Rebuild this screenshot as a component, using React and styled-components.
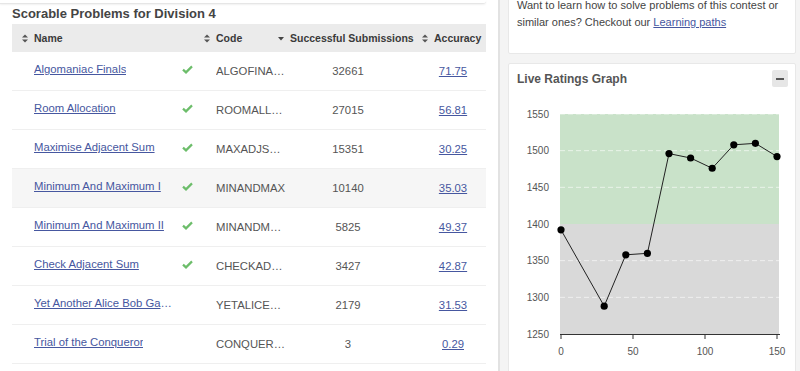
import React from 'react';
import styled, { createGlobalStyle } from 'styled-components';

const GlobalStyle = createGlobalStyle`
  body {
    margin: 0;
    background: #f4f4f4;
    font-family: "Liberation Sans", Arial, sans-serif;
    overflow: hidden;
  }
`;

const Page = styled.div`
  display: flex;
  height: 371px;
  overflow: hidden;
`;

const LeftCol = styled.div`
  width: 498px;
  flex-shrink: 0;
  background: #fff;
  border-right: 2px solid #e2e2e2;
`;

const TopStub = styled.div`
  height: 3px;
  margin-right: 12px;
  border-bottom: 1px solid #e6e6e6;
  border-radius: 0 0 3px 0;
  box-shadow: 0 1px 2px rgba(0, 0, 0, 0.06);
`;

const Title = styled.h2`
  margin: 0 0 2px 12px;
  padding-top: 1px;
  font-size: 13px;
  line-height: 17px;
  font-weight: bold;
  color: #444;
`;

const Table = styled.div`
  margin: 0 12px;
  width: 474px;
`;

const Row = styled.div`
  display: grid;
  grid-template-columns: 182px 82px 144px 66px;
  align-items: center;
  height: ${p => (p.$head ? '28px' : '38px')};
  background: ${p => (p.$head ? '#ebebeb' : p.$hover ? '#f6f6f6' : '#fff')};
  border-bottom: ${p => (p.$head ? 'none' : '1px solid #efefef')};
`;

const HeadCell = styled.div`
  display: flex;
  align-items: center;
  gap: 6px;
  padding-left: ${p => p.$pad}px;
  font-size: 10.5px;
  font-weight: bold;
  color: #3a3a3a;
  white-space: nowrap;
`;

const NameCell = styled.div`
  display: flex;
  align-items: center;
  justify-content: space-between;
  padding: 0 1px 4px 22px;
  font-size: 11.3px;
`;

const NameLink = styled.a`
  color: #4657a0;
  text-decoration: underline;
  max-width: 140px;
  white-space: nowrap;
  overflow: hidden;
  text-overflow: ellipsis;
`;

const CodeCell = styled.div`
  padding-left: 22px;
  font-size: 11.3px;
  color: #555;
`;

const CodeText = styled.div`
  width: 70px;
  white-space: nowrap;
  overflow: hidden;
  text-overflow: ellipsis;
`;

const NumCell = styled.div`
  text-align: center;
  font-size: 11.3px;
  color: #555;
`;

const AccLink = styled.a`
  color: #4657a0;
  text-decoration: underline;
`;

const RightCol = styled.div`
  width: 288px;
  margin-left: 8px;
  display: flex;
  flex-direction: column;
  gap: 9px;
`;

const Card = styled.div`
  background: #fff;
  border: 1px solid #e8e8e8;
  border-radius: 2px;
`;

const InfoCard = styled(Card)`
  margin-top: -6px;
  padding: 2px 8px 22px;
  font-size: 11px;
  line-height: 17px;
  color: #444;
`;

const InfoLink = styled.a`
  color: #4657a0;
  text-decoration: underline;
`;

const CardHead = styled.div`
  display: flex;
  align-items: center;
  justify-content: space-between;
  padding: 6px 7px 0 8px;
  height: 17px;
`;

const CardTitle = styled.span`
  font-size: 12px;
  font-weight: bold;
  color: #555;
`;

const MinusBtn = styled.button`
  width: 16px;
  height: 17px;
  border: none;
  border-radius: 2px;
  background: #e6e6e6;
  padding: 0;
  display: flex;
  align-items: center;
  justify-content: center;

  &::after {
    content: '';
    width: 8px;
    height: 2px;
    background: #555;
  }
`;

const ChartBox = styled.div`
  margin-top: 12px;
  height: 280px;
`;

const SortIcon = ({ down }) => (
  <svg width="6" height="9" viewBox="0 0 6 9">
    {down ? (
      <path d="M0 3 L6 3 L3 6.5 Z" fill="#444" />
    ) : (
      <>
        <path d="M0 3.6 L6 3.6 L3 0.5 Z" fill="#555" />
        <path d="M0 5.4 L6 5.4 L3 8.5 Z" fill="#555" />
      </>
    )}
  </svg>
);

const Check = () => (
  <svg width="11" height="9" viewBox="0 0 11 9">
    <path d="M1 4.6 L4 7.4 L10 1.4" fill="none" stroke="#6cbd6a" strokeWidth="2.2" />
  </svg>
);

const problems = [
  { name: 'Algomaniac Finals', code: 'ALGOFINALS', subs: 32661, acc: '71.75', ok: true },
  { name: 'Room Allocation', code: 'ROOMALLOC', subs: 27015, acc: '56.81', ok: true },
  { name: 'Maximise Adjacent Sum', code: 'MAXADJSUM', subs: 15351, acc: '30.25', ok: true },
  { name: 'Minimum And Maximum I', code: 'MINANDMAX', subs: 10140, acc: '35.03', ok: true, hover: true },
  { name: 'Minimum And Maximum II', code: 'MINANDMAX2', subs: 5825, acc: '49.37', ok: true },
  { name: 'Check Adjacent Sum', code: 'CHECKADJSUM', subs: 3427, acc: '42.87', ok: true },
  { name: 'Yet Another Alice Bob Game', code: 'YETALICEBOB', subs: 2179, acc: '31.53' },
  { name: 'Trial of the Conqueror', code: 'CONQUEROR', subs: 3, acc: '0.29' },
];

const ratings = [
  [0, 1392], [30, 1288], [45, 1358], [60, 1360], [75, 1496],
  [90, 1490], [105, 1476], [120, 1508], [135, 1510], [150, 1492],
];

const px = t => 52 + t * 1.44;
const py = v => 235 - (v - 1250) * (220 / 300);

const RatingsChart = () => (
  <svg width="288" height="280" viewBox="0 0 288 280" fontFamily="Liberation Sans, Arial, sans-serif">
    <rect x="51" y={py(1550)} width="219" height={py(1400) - py(1550)} fill="#c9e2c9" />
    <rect x="51" y={py(1400)} width="219" height={py(1250) - py(1400)} fill="#d9d9d9" />
    {[1550, 1500, 1450, 1350, 1300].map(v => (
      <line key={v} x1="51" x2="270" y1={py(v)} y2={py(v)} stroke="#fff" strokeOpacity="0.6" strokeDasharray="5 3" />
    ))}
    {[1550, 1500, 1450, 1400, 1350, 1300, 1250].map(v => (
      <text key={v} x="40" y={py(v) + 3.5} fontSize="10" fill="#555" textAnchor="end">{v}</text>
    ))}
    <line x1="51" x2="271" y1="235.5" y2="235.5" stroke="#333" />
    {[0, 50, 100, 150].map(t => (
      <g key={t}>
        <line x1={px(t)} x2={px(t)} y1="235" y2="240" stroke="#333" />
        <text x={px(t)} y="256" fontSize="10" fill="#555" textAnchor="middle">{t}</text>
      </g>
    ))}
    <polyline
      points={ratings.map(([t, v]) => `${px(t)},${py(v)}`).join(' ')}
      fill="none"
      stroke="#222"
      strokeWidth="1"
    />
    {ratings.map(([t, v]) => (
      <circle key={t} cx={px(t)} cy={py(v)} r="3.6" fill="#000" />
    ))}
  </svg>
);

export default function App() {
  return (
    <>
      <GlobalStyle />
      <Page>
        <LeftCol>
          <TopStub />
          <Title>Scorable Problems for Division 4</Title>
          <Table>
            <Row $head>
              <HeadCell $pad={10}><SortIcon />Name</HeadCell>
              <HeadCell $pad={10}><SortIcon />Code</HeadCell>
              <HeadCell $pad={2}><SortIcon down />Successful Submissions</HeadCell>
              <HeadCell $pad={2}><SortIcon />Accuracy</HeadCell>
            </Row>
            {problems.map(p => (
              <Row key={p.code} $hover={p.hover}>
                <NameCell>
                  <NameLink href="#">{p.name}</NameLink>
                  {p.ok && <Check />}
                </NameCell>
                <CodeCell>
                  <CodeText>{p.code}</CodeText>
                </CodeCell>
                <NumCell>{p.subs}</NumCell>
                <NumCell><AccLink href="#">{p.acc}</AccLink></NumCell>
              </Row>
            ))}
          </Table>
        </LeftCol>
        <RightCol>
          <InfoCard>
            Want to learn how to solve problems of this contest or similar ones? Checkout our{' '}
            <InfoLink href="#">Learning paths</InfoLink>
          </InfoCard>
          <Card>
            <CardHead>
              <CardTitle>Live Ratings Graph</CardTitle>
              <MinusBtn aria-label="collapse" />
            </CardHead>
            <ChartBox>
              <RatingsChart />
            </ChartBox>
          </Card>
        </RightCol>
      </Page>
    </>
  );
}
